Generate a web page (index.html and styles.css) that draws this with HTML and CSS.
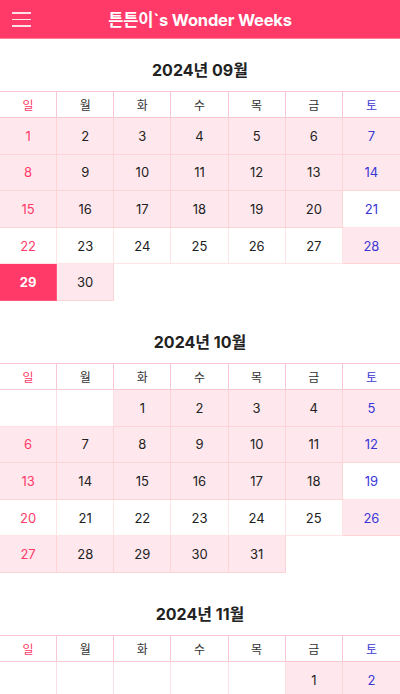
FILE: index.html
```html
<!DOCTYPE html>
<html lang="ko">
<head>
    <meta charset="UTF-8">
    <meta name="viewport" content="width=device-width, initial-scale=1.0">
    <title>Wonder Weeks</title>
    <link rel="stylesheet" href="styles.css">
</head>
<body>
    <div class="app-bar">
        <div class="menu-btn">
            <span></span><span></span><span></span>
        </div>
        <div class="app-title">튼튼이`s Wonder Weeks</div>
    </div>

    <div id="calendars"></div>

    <script>
        const months = [
            { year: 2024, month: 9, marks: [1,2,3,4,5,6,7,8,9,10,11,12,13,14,15,16,17,18,19,20,28,30], today: 29 },
            { year: 2024, month: 10, marks: [1,2,3,4,5,6,7,8,9,10,11,12,13,14,15,16,17,18,26,27,28,29,30,31] },
            { year: 2024, month: 11, marks: [1,2] }
        ];
        const dayNames = ["일", "월", "화", "수", "목", "금", "토"];

        function pad(n) {
            return n < 10 ? "0" + n : "" + n;
        }

        function buildMonth(m) {
            const section = document.createElement("div");
            section.className = "month";

            const title = document.createElement("div");
            title.className = "month-title";
            title.textContent = m.year + "년 " + pad(m.month) + "월";
            section.appendChild(title);

            const grid = document.createElement("div");
            grid.className = "grid";

            dayNames.forEach(function(name, i) {
                const d = document.createElement("div");
                d.className = "day-name";
                if (i === 0) d.classList.add("sun");
                if (i === 6) d.classList.add("sat");
                d.textContent = name;
                grid.appendChild(d);
            });

            const first = new Date(m.year, m.month - 1, 1).getDay();
            const total = new Date(m.year, m.month, 0).getDate();

            for (let i = 0; i < first; i++) {
                const blank = document.createElement("div");
                blank.className = "cell blank";
                grid.appendChild(blank);
            }

            for (let day = 1; day <= total; day++) {
                const cell = document.createElement("div");
                const col = (first + day - 1) % 7;
                cell.className = "cell";
                if (col === 0) cell.classList.add("sun");
                if (col === 6) cell.classList.add("sat");
                if (m.marks.indexOf(day) !== -1) cell.classList.add("mark");
                if (m.today === day) cell.classList.add("today");
                cell.textContent = day;
                grid.appendChild(cell);
            }

            section.appendChild(grid);
            return section;
        }

        const wrap = document.getElementById("calendars");
        months.forEach(function(m) {
            wrap.appendChild(buildMonth(m));
        });
    </script>
</body>
</html>
```

FILE: styles.css
```css
body {
    margin: 0;
    background: #ffffff;
    font-family: Inter, "Noto Sans CJK KR", sans-serif;
    color: #222222;
}
.app-bar {
    height: 39px;
    background: #ff3a68;
    border-bottom: 1px solid #ff7f9b;
    box-sizing: border-box;
    display: flex;
    align-items: center;
    justify-content: center;
    position: relative;
}
.menu-btn {
    position: absolute;
    left: 12px;
    top: 12px;
    width: 19px;
    display: flex;
    flex-direction: column;
    gap: 5px;
}
.menu-btn span {
    display: block;
    height: 1.5px;
    background: rgba(255, 255, 255, 0.85);
}
.app-title {
    color: #ffffff;
    font-size: 16.5px;
    font-weight: bold;
    letter-spacing: -0.2px;
}
.month {
    margin-bottom: 10px;
}
.month-title {
    padding: 22px 0 12px;
    line-height: 18px;
    text-align: center;
    font-size: 16px;
    font-weight: bold;
    color: #222222;
}
.grid {
    display: grid;
    grid-template-columns: repeat(7, 1fr);
    grid-auto-rows: 36.6px;
    grid-template-rows: 26px;
    border-top: 1px solid #f9c8d4;
}
.day-name {
    display: flex;
    align-items: center;
    justify-content: center;
    font-size: 12px;
    color: #333333;
    border-right: 1px solid #f9c8d4;
    border-bottom: 1px solid #f9c8d4;
}
.day-name:nth-child(7n) {
    border-right: none;
}
.cell {
    display: flex;
    align-items: center;
    justify-content: center;
    font-size: 13px;
    color: #222222;
    background: #ffffff;
    border-right: 1px solid #ffe4e6;
    border-bottom: 1px solid #ffe4e6;
}
.cell:nth-child(7n) {
    border-right: none;
}
.cell.blank {
    border-color: #fde0e6;
}
.cell.mark {
    background: #ffe8ed;
    border-color: #fdd5d7;
}
.cell.today {
    background: #ff3a68;
    border-color: #ff5a80;
    color: #ffffff;
    font-weight: bold;
}
.sun {
    color: #ff3a68;
}
.sat {
    color: #3a36d6;
}
.cell.today.sun {
    color: #ffffff;
}
```
